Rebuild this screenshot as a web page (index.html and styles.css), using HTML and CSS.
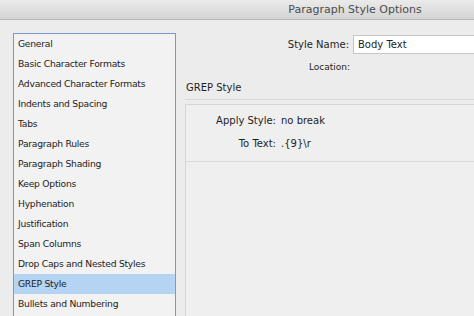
FILE: index.html
```html
<!DOCTYPE html>
<html lang="en">

<head>
    <meta charset="UTF-8">
    <meta name="viewport" content="width=device-width, initial-scale=1.0">
    <title>Paragraph Style Options</title>
    <link rel="stylesheet" href="styles.css">
</head>

<body>
    <div class="dialog">
        <div class="titlebar">Paragraph Style Options</div>

        <div class="content">
            <ul class="sections">
                <li>General</li>
                <li>Basic Character Formats</li>
                <li>Advanced Character Formats</li>
                <li>Indents and Spacing</li>
                <li>Tabs</li>
                <li>Paragraph Rules</li>
                <li>Paragraph Shading</li>
                <li>Keep Options</li>
                <li>Hyphenation</li>
                <li>Justification</li>
                <li>Span Columns</li>
                <li>Drop Caps and Nested Styles</li>
                <li class="selected">GREP Style</li>
                <li>Bullets and Numbering</li>
            </ul>

            <div class="pane">
                <div class="field">
                    <label for="style_name" class="lbl">Style Name:</label>
                    <input id="style_name" type="text" value="Body Text">
                </div>
                <div class="field small">
                    <div class="lbl">Location:</div>
                </div>

                <div class="heading">GREP Style</div>

                <div class="grep">
                    <div class="grep-row">
                        <div class="grep-lbl">Apply Style:</div>
                        <div>no break</div>
                    </div>
                    <div class="grep-row">
                        <div class="grep-lbl">To Text:</div>
                        <div>.{9}\r</div>
                    </div>
                    <div class="grep-rest"></div>
                </div>
            </div>
        </div>
    </div>
</body>

</html>
```

FILE: styles.css
```css
body {
    margin: 0;
    background-color: #ececec;
    overflow: hidden;
    font-family: 'DejaVu Sans', sans-serif;
    color: #1e1e1e;
}

/* the window is wider than the visible area, it gets cropped on the right */
.dialog {
    width: 710px;
    height: 316px;
    display: flex;
    flex-direction: column;
}

.titlebar {
    height: 19px;
    line-height: 20px;
    text-align: center;
    font-size: 11px;
    color: #4c4c4c;
    background: linear-gradient(#ebebeb, #d3d3d3);
    border-bottom: 1px solid #b8b8b8;
}

.content {
    flex: 1;
    display: flex;
    gap: 9px;
    padding: 13px 0 0 13px;
}

/* left list of sections */
.sections {
    list-style: none;
    margin: 0;
    padding: 0;
    width: 161px;
    height: 300px;
    border: 1px solid #7799d2;
    background-color: #f2f2f2;
    font-size: 9.2px;
    letter-spacing: -0.25px;
    color: #222;
}

.sections li {
    height: 20px;
    line-height: 20px;
    padding-left: 4px;
    white-space: nowrap;
}

.sections li.selected {
    background-color: #b5d3f3;
}

/* right side */
.pane {
    flex: 1;
    display: flex;
    flex-direction: column;
    font-size: 10px;
}

.field {
    display: flex;
    align-items: center;
    gap: 4px;
    margin-top: 2px;
    height: 19px;
}

.field .lbl {
    width: 164px;
    text-align: right;
}

.field input {
    width: 240px;
    height: 19px;
    box-sizing: border-box;
    padding: 0 4px;
    border: 1px solid #c6c6c6;
    background-color: white;
    font-family: 'DejaVu Sans', sans-serif;
    font-size: 10px;
    color: #1e1e1e;
    outline: none;
}

.field.small {
    margin-top: 6px;
    height: 14px;
    font-size: 9px;
}

.field.small .lbl {
    width: 165px;
}

.heading {
    margin-top: 6px;
    line-height: 16px;
    padding: 0 0 3px 1px;
    border-bottom: 1px solid #d9d9d9;
}

.grep {
    flex: 1;
    margin-top: 4px;
    border-top: 1px solid #d6d6d6;
    border-left: 1px solid #d6d6d6;
    background-color: #efefef;
    padding-top: 6px;
    display: flex;
    flex-direction: column;
    gap: 3px;
}

.grep-row {
    display: flex;
    gap: 5px;
    line-height: 20px;
}

.grep-lbl {
    width: 90px;
    text-align: right;
}

.grep-rest {
    flex: 1;
    margin-top: 4px;
    border-top: 1px solid #d9d9d9;
}
```
